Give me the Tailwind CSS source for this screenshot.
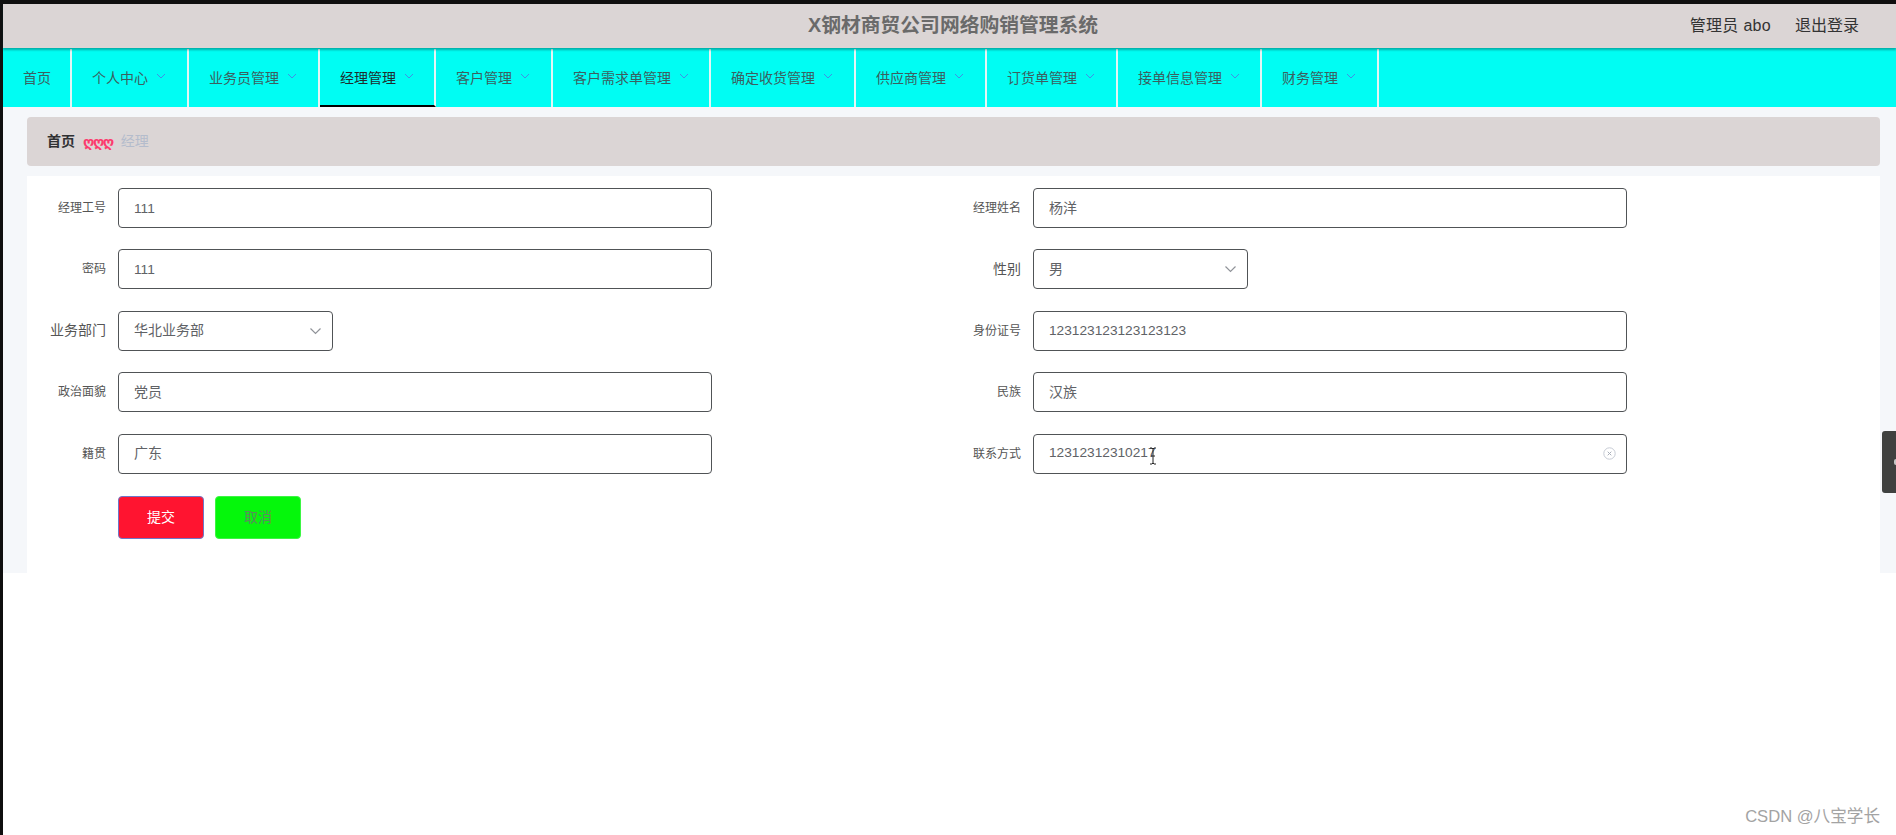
<!DOCTYPE html>
<html lang="zh-CN">
<head>
  <meta charset="UTF-8">
  <meta name="viewport" content="width=device-width, initial-scale=1.0">
  <title>X钢材商贸公司网络购销管理系统</title>
  <script src="https://cdn.jsdelivr.net/npm/@tailwindcss/browser@4"></script>
</head>
<body class="bg-white font-['Liberation_Sans','Noto_Sans_CJK_SC',sans-serif]">
<div class="relative h-[835px] w-[1896px] overflow-hidden bg-[#0f0f0f] pt-[4px] pl-[3px]">
  <div class="h-[831px] bg-white">

    <!-- header -->
    <header class="relative z-10 flex h-[44px] items-center bg-[#dbd5d5] pl-[805px] pr-[37px] shadow-[0_2px_2px_rgba(0,60,60,0.4)]">
      <h1 class="text-[19.8px] font-bold text-[#6a6a6a]">X钢材商贸公司网络购销管理系统</h1>
      <div class="ml-auto flex items-center gap-[24px] text-[16px] text-[#333333]">
        <span class="tracking-[0.3px]">管理员 abo</span>
        <span>退出登录</span>
      </div>
    </header>

    <!-- nav -->
    <nav class="flex h-[59px] bg-[#00fdf3] pt-[1px] text-[14px] text-[#3b5f60]">
      <a class="flex w-[69px] items-center border-r-2 border-[#e4f5f4] pl-[20px]">首页</a>
      <a class="flex w-[117px] items-center border-r-2 border-[#e4f5f4] pl-[20px]">个人中心
        <svg class="mb-[4px] ml-[8px] h-[8px] w-[10px]" viewBox="0 0 10 8" fill="none" stroke="#3f8fe6"><path d="M1 2l4 4 4-4"/></svg></a>
      <a class="flex w-[131px] items-center border-r-2 border-[#e4f5f4] pl-[20px]">业务员管理
        <svg class="mb-[4px] ml-[8px] h-[8px] w-[10px]" viewBox="0 0 10 8" fill="none" stroke="#3f8fe6"><path d="M1 2l4 4 4-4"/></svg></a>
      <a class="flex w-[116px] items-center border-r-2 border-b-2 border-r-[#e4f5f4] border-b-black pl-[20px] pt-[2px] text-[#1f2d2e]">经理管理
        <svg class="mb-[4px] ml-[8px] h-[8px] w-[10px]" viewBox="0 0 10 8" fill="none" stroke="#3f8fe6"><path d="M1 2l4 4 4-4"/></svg></a>
      <a class="flex w-[117px] items-center border-r-2 border-[#e4f5f4] pl-[20px]">客户管理
        <svg class="mb-[4px] ml-[8px] h-[8px] w-[10px]" viewBox="0 0 10 8" fill="none" stroke="#3f8fe6"><path d="M1 2l4 4 4-4"/></svg></a>
      <a class="flex w-[158px] items-center border-r-2 border-[#e4f5f4] pl-[20px]">客户需求单管理
        <svg class="mb-[4px] ml-[8px] h-[8px] w-[10px]" viewBox="0 0 10 8" fill="none" stroke="#3f8fe6"><path d="M1 2l4 4 4-4"/></svg></a>
      <a class="flex w-[145px] items-center border-r-2 border-[#e4f5f4] pl-[20px]">确定收货管理
        <svg class="mb-[4px] ml-[8px] h-[8px] w-[10px]" viewBox="0 0 10 8" fill="none" stroke="#3f8fe6"><path d="M1 2l4 4 4-4"/></svg></a>
      <a class="flex w-[131px] items-center border-r-2 border-[#e4f5f4] pl-[20px]">供应商管理
        <svg class="mb-[4px] ml-[8px] h-[8px] w-[10px]" viewBox="0 0 10 8" fill="none" stroke="#3f8fe6"><path d="M1 2l4 4 4-4"/></svg></a>
      <a class="flex w-[131px] items-center border-r-2 border-[#e4f5f4] pl-[20px]">订货单管理
        <svg class="mb-[4px] ml-[8px] h-[8px] w-[10px]" viewBox="0 0 10 8" fill="none" stroke="#3f8fe6"><path d="M1 2l4 4 4-4"/></svg></a>
      <a class="flex w-[144px] items-center border-r-2 border-[#e4f5f4] pl-[20px]">接单信息管理
        <svg class="mb-[4px] ml-[8px] h-[8px] w-[10px]" viewBox="0 0 10 8" fill="none" stroke="#3f8fe6"><path d="M1 2l4 4 4-4"/></svg></a>
      <a class="flex w-[117px] items-center border-r-2 border-[#e4f5f4] pl-[20px]">财务管理
        <svg class="mb-[4px] ml-[8px] h-[8px] w-[10px]" viewBox="0 0 10 8" fill="none" stroke="#3f8fe6"><path d="M1 2l4 4 4-4"/></svg></a>
    </nav>

    <main class="h-[466px] bg-[#f5f7fa] pt-[10px] pl-[24px] pr-[16px]">
      <!-- breadcrumb -->
      <div class="flex h-[49px] items-center gap-[8px] rounded-[4px] bg-[#dbd5d5] pl-[20px] text-[14px]">
        <span class="font-bold text-[#303133]">首页</span>
        <span class="pt-[2px] font-['DejaVu_Sans'] text-[14px] font-bold tracking-[-1.5px] text-[#fb3b6e]">ღღღ</span>
        <span class="text-[#b4bccc]">经理</span>
      </div>

      <!-- form -->
      <form class="mt-[10px] h-[397px] bg-white pt-[12px] pl-[12px]">
        <div class="grid grid-cols-[915px_1fr] gap-y-[21.4px] text-[14px] text-[#606266]">
          <div class="flex h-[40px] items-center">
            <label class="mr-[12px] w-[67px] text-right text-[12px] text-[#555555]">经理工号</label>
            <div class="flex h-full w-[594px] items-center rounded-[4px] border border-[#505356] px-[15px] pt-[2px] text-[13.7px]">111</div>
          </div>
          <div class="flex h-[40px] items-center">
            <label class="mr-[12px] w-[67px] text-right text-[12px] text-[#555555]">经理姓名</label>
            <div class="flex h-full w-[594px] items-center rounded-[4px] border border-[#505356] px-[15px]">杨洋</div>
          </div>

          <div class="flex h-[40px] items-center">
            <label class="mr-[12px] w-[67px] text-right text-[12px] text-[#555555]">密码</label>
            <div class="flex h-full w-[594px] items-center rounded-[4px] border border-[#505356] px-[15px] pt-[2px] text-[13.7px]">111</div>
          </div>
          <div class="flex h-[40px] items-center">
            <label class="mr-[12px] w-[67px] text-right text-[14px] text-[#555555]">性别</label>
            <div class="flex h-full w-[215px] items-center justify-between rounded-[4px] border border-[#505356] pl-[15px] pr-[10px]">男
              <svg class="h-[8px] w-[13px]" viewBox="0 0 13 8" fill="none" stroke="#909399" stroke-width="1.2"><path d="M1.5 1.5l5 5 5-5"/></svg></div>
          </div>

          <div class="flex h-[40px] items-center">
            <label class="mr-[12px] w-[67px] text-right text-[14px] text-[#555555]">业务部门</label>
            <div class="flex h-full w-[215px] items-center justify-between rounded-[4px] border border-[#505356] pl-[15px] pr-[10px]">华北业务部
              <svg class="h-[8px] w-[13px]" viewBox="0 0 13 8" fill="none" stroke="#909399" stroke-width="1.2"><path d="M1.5 1.5l5 5 5-5"/></svg></div>
          </div>
          <div class="flex h-[40px] items-center">
            <label class="mr-[12px] w-[67px] text-right text-[12px] text-[#555555]">身份证号</label>
            <div class="flex h-full w-[594px] items-center rounded-[4px] border border-[#505356] px-[15px] text-[13.7px]">123123123123123123</div>
          </div>

          <div class="flex h-[40px] items-center">
            <label class="mr-[12px] w-[67px] text-right text-[12px] text-[#555555]">政治面貌</label>
            <div class="flex h-full w-[594px] items-center rounded-[4px] border border-[#505356] px-[15px]">党员</div>
          </div>
          <div class="flex h-[40px] items-center">
            <label class="mr-[12px] w-[67px] text-right text-[12px] text-[#555555]">民族</label>
            <div class="flex h-full w-[594px] items-center rounded-[4px] border border-[#505356] px-[15px]">汉族</div>
          </div>

          <div class="flex h-[40px] items-center">
            <label class="mr-[12px] w-[67px] text-right text-[12px] text-[#555555]">籍贯</label>
            <div class="flex h-full w-[594px] items-center rounded-[4px] border border-[#505356] px-[15px]">广东</div>
          </div>
          <div class="flex h-[40px] items-center">
            <label class="mr-[12px] w-[67px] text-right text-[12px] text-[#555555]">联系方式</label>
            <div class="relative flex h-full w-[594px] items-center justify-between rounded-[4px] border border-[#505356] pl-[15px] pr-[10px] text-[13.7px]">12312312310217
              <svg class="absolute left-[115px] top-[12px] h-[18px] w-[8px]" viewBox="0 0 8 18" fill="none" stroke="#222222" stroke-width="1"><path d="M1 1h2l1 1 1-1h2M4 2v14M1 17h2l1-1 1 1h2M2 9h4"/></svg>
              <svg class="h-[13px] w-[13px]" viewBox="0 0 13 13" fill="none" stroke="#c6cbd4"><circle cx="6.5" cy="6.5" r="5.7"/><path d="M4.7 4.7l3.6 3.6M8.3 4.7l-3.6 3.6" stroke="#a8aeb9"/></svg>
            </div>
          </div>
        </div>

        <div class="mt-[22px] ml-[79px] flex gap-[11px] text-[14px]">
          <button type="button" class="h-[43px] w-[86px] rounded-[4px] border border-[#6e78c8] bg-[#ff1430] text-white">提交</button>
          <button type="button" class="h-[43px] w-[86px] rounded-[4px] border border-[#3df544] bg-[#05f70b] text-[#5d8a5e]">取消</button>
        </div>
      </form>
    </main>
  </div>

  <!-- 오른쪽 설정 탭 -->
  <div class="absolute right-0 top-[431px] flex h-[62px] w-[14px] items-center justify-end rounded-l-[3px] bg-[#3f4140]">
    <span class="h-[6px] w-[2px] rounded-l-full bg-white/70"></span>
  </div>

  <span class="absolute right-[16px] top-[806px] text-[16.6px] leading-[22px] text-[#a3a3a3]">CSDN @八宝学长</span>
</div>
</body>
</html>
